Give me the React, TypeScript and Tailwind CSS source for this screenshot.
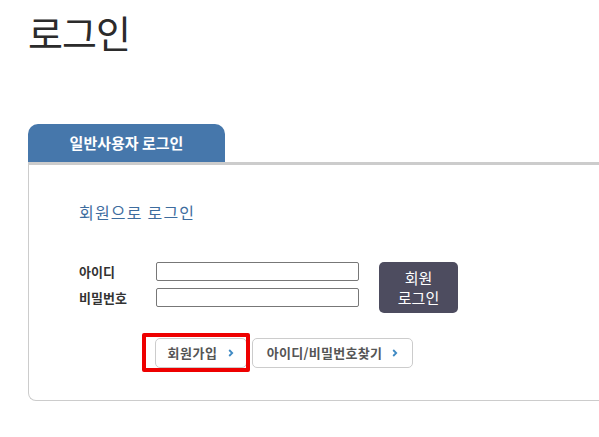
import React from "react";

const font = { fontFamily: '"Noto Sans CJK KR", "Noto Sans", sans-serif' };

function Chevron() {
  return (
    <svg width="6" height="8" viewBox="0 0 6 8" className="shrink-0">
      <path d="M1.2 1 L4.2 4 L1.2 7" fill="none" stroke="#3f8ac4" strokeWidth="1.8" />
    </svg>
  );
}

export default function App() {
  return (
    <div
      className="relative w-[599px] h-[437px] overflow-hidden bg-white text-[#333]"
      style={font}
    >
      <h1 className="pl-[28px] pt-[7px] text-[38px] leading-[50px] font-normal text-[#2b2b2b] tracking-[-1px]">
        로그인
      </h1>

      <div className="mt-[67px] ml-[28px]">
        <div className="w-[197px] h-[38px] bg-[#4677ab] rounded-t-[10px] flex items-center justify-center text-white text-[15px] font-bold">
          일반사용자 로그인
        </div>
        <div className="w-[700px] h-[239px] border-t-[3px] border-l border-b border-[#cccccc] rounded-bl-[8px] pl-[50px] pt-[35px]">
          <div className="text-[16px] leading-[24px] text-[#3d6c9e] tracking-[1.2px]">
            회원으로 로그인
          </div>

          <div className="mt-[38px] flex items-start">
            <div className="flex flex-col gap-[7px]">
              <div className="flex items-center h-[19px]">
                <span className="w-[77px] text-[13px] font-bold text-[#333]">아이디</span>
                <div className="w-[203px] h-[19px] border border-[#777] rounded-[2px] bg-white" />
              </div>
              <div className="flex items-center h-[19px]">
                <span className="w-[77px] text-[13px] font-bold text-[#333]">비밀번호</span>
                <div className="w-[203px] h-[19px] border border-[#777] rounded-[2px] bg-white" />
              </div>
            </div>
            <button className="ml-[20px] w-[79px] h-[51px] rounded-[5px] bg-[#4d4c5f] text-white text-[15px] leading-[20px] flex flex-col items-center justify-center">
              <span>회원</span>
              <span>로그인</span>
            </button>
          </div>

          <div className="mt-[25px] ml-[76px] flex gap-[5px]">
            <button className="w-[92px] h-[30px] border border-[#cccccc] rounded-[5px] bg-white flex items-center justify-center gap-[11px] text-[13px] font-bold text-[#555] tracking-[0.5px]">
              <span>회원가입</span>
              <Chevron />
            </button>
            <button className="w-[161px] h-[30px] border border-[#cccccc] rounded-[5px] bg-white flex items-center justify-center gap-[10px] text-[13px] font-bold text-[#555] tracking-[0.3px]">
              <span>아이디/비밀번호찾기</span>
              <Chevron />
            </button>
          </div>
        </div>
      </div>

      <div className="absolute left-[142px] top-[333px] w-[108px] h-[39px] border-[4px] border-[#ee0000] rounded-[2px]" />
    </div>
  );
}
